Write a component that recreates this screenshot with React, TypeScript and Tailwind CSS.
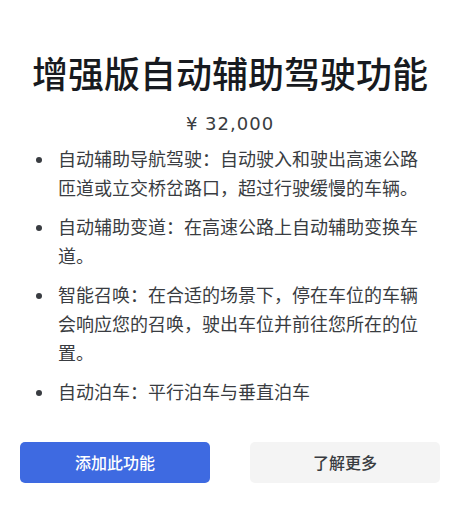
import React from "react";

const items: string[] = [
  "自动辅助导航驾驶：自动驶入和驶出高速公路匝道或立交桥岔路口，超过行驶缓慢的车辆。",
  "自动辅助变道：在高速公路上自动辅助变换车道。",
  "智能召唤：在合适的场景下，停在车位的车辆会响应您的召唤，驶出车位并前往您所在的位置。",
  "自动泊车：平行泊车与垂直泊车",
];

export default function App() {
  return (
    <div
      className="w-[474px] h-[513px] bg-white flex flex-col pl-[20px] pr-[34px]"
      style={{ fontFamily: '"Noto Sans", "Noto Sans CJK SC", sans-serif' }}
    >
      <h1 className="mt-[51px] text-center text-[36px] leading-[48px] font-medium text-[#171a20] whitespace-nowrap">
        增强版自动辅助驾驶功能
      </h1>
      <div
        className="mt-[12px] text-center text-[18px] leading-[26px] tracking-[1px] text-[#393c41]"
        style={{ fontFamily: '"DejaVu Sans", "Noto Sans CJK SC", sans-serif' }}
      >
        ¥ 32,000
      </div>
      <ul className="mt-[8px] pl-[38px] pr-[12px] flex flex-col gap-[10px]">
        {items.map((t) => (
          <li key={t} className="relative text-[18px] leading-[29px] text-[#393c41]">
            <span className="absolute left-[-22px] top-[12px] w-[6px] h-[6px] rounded-full bg-[#393c41]" />
            {t}
          </li>
        ))}
      </ul>
      <div className="mt-[35px] flex gap-[40px]">
        <button className="w-[190px] h-[41px] rounded-[5px] bg-[#3e6ae1] text-white text-[16px] font-medium">
          添加此功能
        </button>
        <button className="w-[190px] h-[41px] rounded-[5px] bg-[#f4f4f4] text-[#393c41] text-[16px] font-medium">
          了解更多
        </button>
      </div>
    </div>
  );
}
